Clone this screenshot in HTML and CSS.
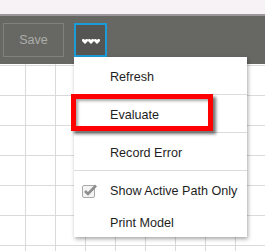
FILE: index.html
```html
<!DOCTYPE html>
<html>
<head>
<meta charset="utf-8">
<link rel="stylesheet" href="styles.css">
</head>
<body>
<div class="page">
  <div class="topstrip"></div>
  <div class="topline"></div>
  <div class="toolbar">
    <button class="btn save">Save</button>
    <button class="btn more" aria-label="More">
      <svg width="18" height="6" viewBox="0 0 18 6">
        <path d="M0 1 Q0 0 1 0 L2 0 L3 1 L4 0 L5 0 Q6 0 6 1 L6 2 L3 5 L0 2 Z" fill="#fff"/>
        <path d="M6 1 Q6 0 7 0 L8 0 L9 1 L10 0 L11 0 Q12 0 12 1 L12 2 L9 5 L6 2 Z" fill="#fff"/>
        <path d="M12 1 Q12 0 13 0 L14 0 L15 1 L16 0 L17 0 Q18 0 18 1 L18 2 L15 5 L12 2 Z" fill="#fff"/>
      </svg>
    </button>
  </div>
  <div class="canvas"></div>

  <div class="menu">
    <div class="item sep">Refresh</div>
    <div class="item sep">Evaluate</div>
    <div class="item sep">Record Error</div>
    <div class="item short check">
      <svg class="cb" width="16" height="14" viewBox="0 0 16 14">
        <rect x="0.5" y="1.5" width="12" height="12" rx="1.5" fill="#f4f4f4" stroke="#a9a9a9"/>
        <path d="M3 7 L6 10 L14 1.5" fill="none" stroke="#8d8d8d" stroke-width="2.6"/>
      </svg>
      <span>Show Active Path Only</span>
    </div>
    <div class="item last">Print Model</div>
  </div>

  <div class="highlight"></div>
</div>
</body>
</html>
```

FILE: styles.css
```css
html, body {
  margin: 0;
  padding: 0;
}
body {
  width: 265px;
  height: 251px;
  overflow: hidden;
  font-family: "Liberation Sans", Arial, sans-serif;
}
.page {
  position: relative;
  width: 265px;
  height: 251px;
  display: flex;
  flex-direction: column;
}
.topstrip {
  height: 14px;
  background: #f7f2f5;
}
.topline {
  height: 2px;
  background: #9d979b;
}
.toolbar {
  height: 48px;
  box-sizing: border-box;
  background: #676864;
  display: flex;
  align-items: flex-start;
  padding: 7px 0 0 3px;
  gap: 10px;
}
.btn {
  margin: 0;
  box-sizing: border-box;
  height: 34px;
  font-family: "Liberation Sans", Arial, sans-serif;
  cursor: pointer;
}
.save {
  width: 61px;
  background: #676864;
  border: 1px solid #80817d;
  color: #acada9;
  font-size: 12.5px;
  padding: 0;
}
.more {
  width: 33px;
  background: #555653;
  border: 2px solid #1b9bd7;
  padding: 0;
  display: flex;
  align-items: center;
  justify-content: center;
}
.more svg {
  display: block;
  margin-top: 4px;
  margin-left: 1px;
}
.canvas {
  flex: 1;
  background-color: #fff;
  background-image:
    linear-gradient(to right, #dadada 1px, transparent 1px),
    linear-gradient(to bottom, #dadada 1px, transparent 1px);
  background-size: 30px 30px;
  background-position: 25px 0, 0 1px;
}
.menu {
  position: absolute;
  left: 74px;
  top: 57px;
  width: 173px;
  background: #fff;
  box-shadow: 1px 2px 4px rgba(0, 0, 0, 0.35);
  padding-bottom: 1px;
}
.item {
  box-sizing: border-box;
  height: 37px;
  padding: 3px 0 0 36px;
  display: flex;
  align-items: center;
  font-size: 12.6px;
  color: #1e1e1e;
}
.sep {
  border-bottom: 1px solid #dcdcdc;
  height: 38px;
}
.short {
  height: 32px;
  padding-top: 8px;
}
.last {
  height: 33px;
  padding-top: 7px;
}
.check {
  padding-left: 8px;
}
.cb {
  display: block;
  margin-right: 12px;
  flex: none;
}
.highlight {
  position: absolute;
  left: 71px;
  top: 94px;
  width: 142px;
  height: 37px;
  box-sizing: border-box;
  border: 5px solid #ff0000;
  box-shadow: 3px 3px 3px rgba(0, 0, 0, 0.55), inset 2px 2px 3px rgba(0, 0, 0, 0.35);
}
```
